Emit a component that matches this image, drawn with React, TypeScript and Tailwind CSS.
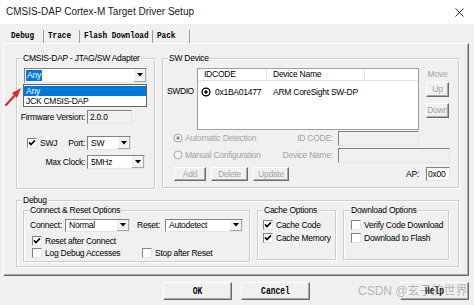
import React from "react";

const sunken =
  "border border-t-[#828282] border-l-[#828282] border-r-[#e4e4e4] border-b-[#e4e4e4]";
const raised =
  "border border-t-[#ffffff] border-l-[#ffffff] border-r-[#6b6b6b] border-b-[#6b6b6b] shadow-[inset_-1px_-1px_0_#a8a8a8]";
const groupBox =
  "relative border border-[#cdcdcd] shadow-[inset_1px_1px_0_#ffffff,1px_1px_0_#ffffff]";
const mono = "[font-family:'Liberation_Mono',monospace] font-bold tracking-normal";

function Legend({ children, left }: { children: React.ReactNode; left: string }) {
  return (
    <span className={`absolute -top-[6px] ${left} bg-[#f0f0f0] px-[1px] leading-[11px] whitespace-nowrap`}>
      {children}
    </span>
  );
}

function Check({ checked }: { checked?: boolean }) {
  return (
    <span
      className={`inline-flex w-[10px] h-[10px] shrink-0 items-center justify-center bg-white ${sunken}`}
    >
      {checked && (
        <svg width="8" height="8" viewBox="0 0 8 8">
          <path d="M1 3.4 L3 5.6 L7 1.4" fill="none" stroke="#000" strokeWidth="1.6" />
        </svg>
      )}
    </span>
  );
}

function Radio({ on }: { on?: boolean }) {
  return (
    <svg width="10" height="10" viewBox="0 0 10 10" className="shrink-0">
      <circle cx="5" cy="5" r="4" fill="#f4f4f4" stroke="#a8a8a8" strokeWidth="1" />
      {on && <circle cx="5" cy="5" r="1.7" fill="#8f8f8f" />}
    </svg>
  );
}

function Arrow() {
  return (
    <div className="w-[12px] h-full flex items-center justify-center bg-[#f2f2f2] border-r border-b border-[#a8a8a8]">
      <svg width="6" height="4" viewBox="0 0 6 4">
        <path d="M0 0 H6 L3 3.5 Z" fill="#000" />
      </svg>
    </div>
  );
}

function Select({
  value,
  w,
  h = "h-[15px]",
  hl,
}: {
  value: string;
  w: string;
  h?: string;
  hl?: boolean;
}) {
  return (
    <div className={`flex items-stretch ${w} ${h} bg-white ${sunken}`}>
      <div className="flex-1 flex items-center pl-[1px]">
        <span className={hl ? "bg-[#0078d7] text-white px-[1px] leading-[11px]" : "pl-[2px]"}>{value}</span>
      </div>
      <Arrow />
    </div>
  );
}

function Btn({
  children,
  w,
  h = "h-[15px]",
  disabled,
  className = "",
}: {
  children: React.ReactNode;
  w: string;
  h?: string;
  disabled?: boolean;
  className?: string;
}) {
  return (
    <div
      className={`flex items-center justify-center shrink-0 ${w} ${h} bg-[#f0f0f0] ${raised} ${
        disabled ? "text-[#a3a3a3]" : "text-black"
      } ${className}`}
    >
      {children}
    </div>
  );
}

function CheckRow({ checked, label }: { checked?: boolean; label: string }) {
  return (
    <div className="flex items-center gap-[3px] h-[10px] whitespace-nowrap">
      <Check checked={checked} />
      <span>{label}</span>
    </div>
  );
}

export default function App() {
  return (
    <div className="relative w-[474px] h-[305px] overflow-hidden bg-[#f0f0f0] text-black text-[8.5px] tracking-[-0.25px] leading-none [font-family:'Liberation_Sans',Arial,sans-serif] flex flex-col">
      {/* Title bar */}
      <div className="h-[24px] shrink-0 bg-white flex items-center justify-between pl-[6px] pr-[10px]">
        <span className="text-[10px] tracking-normal text-[#1a1a1a]">
          CMSIS-DAP Cortex-M Target Driver Setup
        </span>
        <svg width="9" height="9" viewBox="0 0 9 9">
          <path d="M0.5 0.5 L8.5 8.5 M8.5 0.5 L0.5 8.5" stroke="#333" strokeWidth="1" />
        </svg>
      </div>

      {/* Tabs */}
      <div className={`h-[19px] shrink-0 flex items-end pl-[4px] text-[7.7px] ${mono}`}>
        <div className="h-[13px] w-[40px] pl-[7px] flex items-center border-r border-[#9a9a9a]">
          <span className="inline-block scale-y-125">Debug</span>
        </div>
        <div className="h-[13px] w-[36px] pl-[4px] flex items-center border-r border-[#9a9a9a]">
          <span className="inline-block scale-y-125">Trace</span>
        </div>
        <div className="h-[13px] w-[73px] pl-[4px] flex items-center border-r border-[#9a9a9a]">
          <span className="inline-block scale-y-125">Flash Download</span>
        </div>
        <div className="h-[13px] w-[37px] pl-[4px] flex items-center border-r border-[#9a9a9a]">
          <span className="inline-block scale-y-125">Pack</span>
        </div>
      </div>

      {/* Tab panel */}
      <div className="ml-[3px] w-[466px] h-[233px] shrink-0 border border-t-[#ffffff] border-l-[#ffffff] border-r-[#6b6b6b] border-b-[#6b6b6b] shadow-[inset_-1px_-1px_0_#a8a8a8] pl-[12px] pt-[14px] flex flex-col">
        <div className="flex gap-[7px]">
          {/* CMSIS-DAP adapter group */}
          <div className={`${groupBox} w-[139px] h-[131px] flex flex-col`}>
            <Legend left="left-[5px]">CMSIS-DAP - JTAG/SW Adapter</Legend>
            <div className="mt-[9px] ml-[7px]">
              <Select value="Any" w="w-[123px]" hl />
            </div>
            {/* open dropdown list */}
            <div className="absolute top-[25px] left-[6px] w-[124px] h-[23px] bg-white border border-[#646464] z-10 flex flex-col pt-[1px]">
              <div className="h-[11px] bg-[#0078d7] text-white flex items-center pl-[2px]">Any</div>
              <div className="h-[10px] flex items-center pl-[2px]">JCK CMSIS-DAP</div>
            </div>
            <div className="mt-[27px] flex items-center h-[14px]">
              <span className="w-[70px] text-right pr-[2px] whitespace-nowrap">Firmware Version:</span>
              <div className={`w-[45px] h-[14px] bg-[#f0f0f0] ${sunken} flex items-center pl-[2px]`}>2.0.0</div>
            </div>
            <div className="mt-[12px] flex items-center h-[14px]">
              <div className="w-[70px] flex items-center pr-[2px]">
                <span className="ml-[10px]">
                  <Check checked />
                </span>
                <span className="ml-[3px]">SWJ</span>
                <span className="ml-auto">Port:</span>
              </div>
              <Select value="SW" w="w-[44px]" h="h-[14px]" />
            </div>
            <div className="mt-[5px] flex items-center h-[14px]">
              <span className="w-[70px] text-right pr-[2px]">Max Clock:</span>
              <Select value="5MHz" w="w-[58px]" h="h-[14px]" />
            </div>
          </div>

          {/* SW Device group */}
          <div className={`${groupBox} w-[297px] h-[130px] flex flex-col`}>
            <Legend left="left-[5px]">SW Device</Legend>
            <div className="mt-[9px] flex">
              <div className="w-[34px] pl-[4px] pt-[19px] tracking-[-0.4px]">SWDIO</div>
              <div className={`w-[222px] h-[62px] bg-white border border-[#a0a0a0] flex flex-col`}>
                <div className="h-[12px] flex border-b border-[#e3e3e3]">
                  <div className="w-[69px] pl-[6px] flex items-center border-r border-[#e3e3e3]">IDCODE</div>
                  <div className="w-[98px] pl-[6px] flex items-center border-r border-[#e3e3e3]">Device Name</div>
                  <div className="flex-1" />
                </div>
                <div className="mt-[5px] h-[12px] flex items-center">
                  <div className="w-[69px] pl-[3px] flex items-center gap-[4px]">
                    <svg width="10" height="10" viewBox="0 0 10 10">
                      <circle cx="5" cy="5" r="3.9" fill="none" stroke="#000" strokeWidth="1.4" />
                      <circle cx="5" cy="5" r="1.7" fill="#000" />
                    </svg>
                    <span>0x1BA01477</span>
                  </div>
                  <div className="pl-[6px]">ARM CoreSight SW-DP</div>
                </div>
              </div>
              <div className="ml-[7px] w-[23px] flex flex-col items-center">
                <div className="h-[12px] flex items-center text-[#a3a3a3]">Move</div>
                <Btn w="w-[23px]" disabled className="mt-[2px]">Up</Btn>
                <Btn w="w-[23px]" disabled className="mt-[6px]">Down</Btn>
              </div>
            </div>
            <div className="mt-[0px] flex items-center h-[16px]">
              <div className="w-[170px] flex items-center text-[#a3a3a3]">
                <span className="ml-[10px]">
                  <Radio on />
                </span>
                <span className="ml-[2px]">Automatic Detection</span>
                <span className="ml-auto">ID CODE:</span>
              </div>
              <div className={`ml-[5px] w-[81px] h-[15px] bg-[#f0f0f0] ${sunken}`} />
            </div>
            <div className="mt-[1px] flex items-center h-[16px]">
              <div className="w-[170px] flex items-center text-[#a3a3a3]">
                <span className="ml-[10px]">
                  <Radio />
                </span>
                <span className="ml-[2px]">Manual Configuration</span>
                <span className="ml-auto">Device Name:</span>
              </div>
              <div className={`ml-[5px] w-[112px] h-[15px] bg-[#f0f0f0] ${sunken}`} />
            </div>
            <div className="mt-[4px] flex items-center h-[14px]">
              <Btn w="w-[32px]" h="h-[14px]" disabled className="ml-[11px]">Add</Btn>
              <Btn w="w-[37px]" h="h-[14px]" disabled className="ml-[5px]">Delete</Btn>
              <Btn w="w-[36px]" h="h-[14px]" disabled className="ml-[5px]">Update</Btn>
              <span className="ml-auto">AP:</span>
              <div className={`ml-[7px] mr-[8px] w-[24px] h-[14px] bg-white ${sunken} flex items-center pl-[1px]`}>0x00</div>
            </div>
          </div>
        </div>

        {/* Debug group */}
        <div className={`${groupBox} mt-[11px] w-[443px] h-[67px] flex`}>
          <Legend left="left-[5px]">Debug</Legend>
          <div className="mt-[9px] flex items-start">
            <div className={`${groupBox} ml-[6px] w-[227px] h-[52px] flex flex-col`}>
              <Legend left="left-[5px]">Connect &amp; Reset Options</Legend>
              <div className="mt-[8px] flex items-center h-[13px]">
                <span className="w-[41px] pl-[6px]">Connect:</span>
                <Select value="Normal" w="w-[65px]" h="h-[13px]" />
                <span className="w-[35px] pl-[7px]">Reset:</span>
                <Select value="Autodetect" w="w-[78px]" h="h-[13px]" />
              </div>
              <div className="mt-[4px] ml-[8px]">
                <CheckRow checked label="Reset after Connect" />
              </div>
              <div className="mt-[2px] ml-[8px] flex">
                <div className="w-[110px]">
                  <CheckRow label="Log Debug Accesses" />
                </div>
                <CheckRow label="Stop after Reset" />
              </div>
            </div>
            <div className={`${groupBox} ml-[7px] w-[79px] h-[50px] flex flex-col`}>
              <Legend left="left-[5px]">Cache Options</Legend>
              <div className="mt-[9px] ml-[5px]">
                <CheckRow checked label="Cache Code" />
              </div>
              <div className="mt-[3px] ml-[5px]">
                <CheckRow checked label="Cache Memory" />
              </div>
            </div>
            <div className={`${groupBox} ml-[7px] w-[106px] h-[50px] flex flex-col`}>
              <Legend left="left-[6px]">Download Options</Legend>
              <div className="mt-[9px] ml-[7px]">
                <CheckRow label="Verify Code Download" />
              </div>
              <div className="mt-[3px] ml-[7px]">
                <CheckRow label="Download to Flash" />
              </div>
            </div>
          </div>
        </div>
      </div>

      {/* Bottom buttons */}
      <div className={`mt-[6px] flex text-[8px] ${mono}`}>
        <Btn w="w-[69px]" h="h-[18px]" className="ml-[163px]">
          <span className="inline-block scale-y-125">OK</span>
        </Btn>
        <Btn w="w-[69px]" h="h-[18px]" className="ml-[9px]">
          <span className="inline-block scale-y-125">Cancel</span>
        </Btn>
        <Btn w="w-[69px]" h="h-[18px]" className="ml-[90px]">
          <span className="inline-block scale-y-125">Help</span>
        </Btn>
      </div>

      {/* red annotation arrow */}
      <svg className="absolute left-[3px] top-[85px]" width="22" height="22" viewBox="0 0 22 22">
        <path d="M3 20 L13 9" stroke="#e3262b" strokeWidth="2.2" strokeLinecap="round" />
        <path d="M18 3 L9 8 L14 13 Z" fill="#e3262b" />
      </svg>

      {/* watermark */}
      <div className="absolute left-[358px] top-[284px] text-[12px] tracking-normal leading-[15px] text-[#8c8c8c]/60 [font-family:'Liberation_Sans','Noto_Sans_CJK_SC',sans-serif] whitespace-nowrap">
        CSDN @玄子的世界
      </div>
    </div>
  );
}
